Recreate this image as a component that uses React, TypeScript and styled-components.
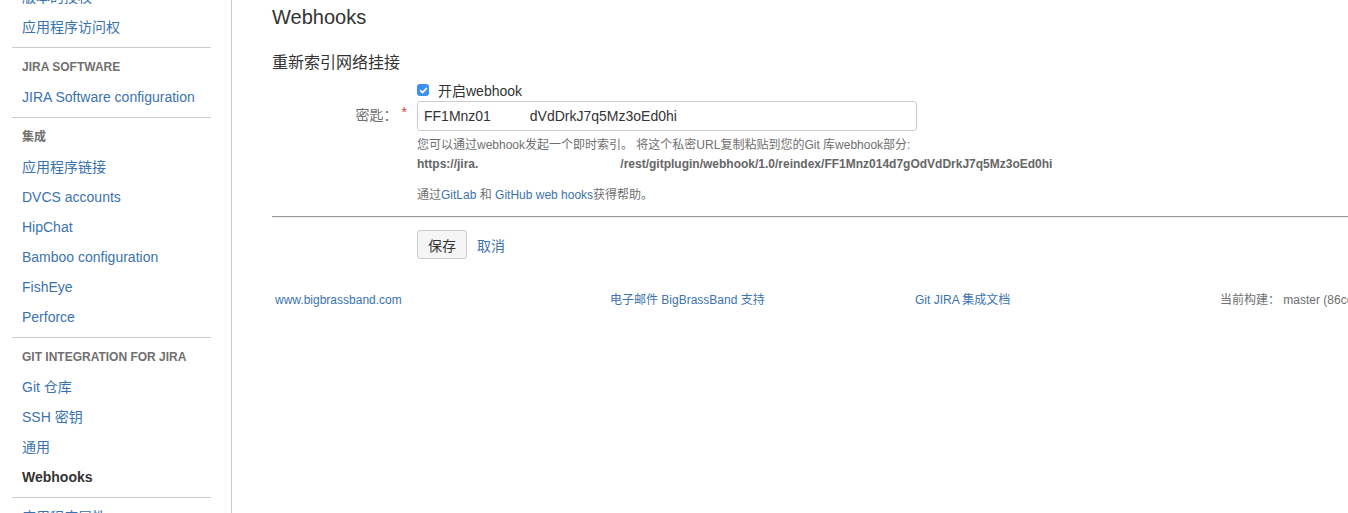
import React from "react";
import styled, { createGlobalStyle } from "styled-components";

const Global = createGlobalStyle`
  html, body { margin: 0; padding: 0; overflow: hidden; background: #fff; }
  body {
    font-family: "Liberation Sans", Arial, "Noto Sans CJK SC", sans-serif;
    font-size: 14px;
    color: #333;
  }
  * { box-sizing: border-box; }
`;

const Page = styled.div`
  display: flex;
  width: 100%;
  min-height: 513px;
`;

const Sidebar = styled.nav`
  flex: 0 0 232px;
  border-right: 1px solid #ccc;
  padding: 0 20px 0 12px;
  margin-top: -18px;
`;

const NavItem = styled.a<{ $active?: boolean }>`
  display: block;
  height: 30px;
  line-height: 30px;
  padding-left: 10px;
  font-size: 14px;
  white-space: nowrap;
  text-decoration: none;
  color: ${(p) => (p.$active ? "#333" : "#3b73af")};
  font-weight: ${(p) => (p.$active ? "bold" : "normal")};
`;

const NavHeading = styled.div`
  height: 30px;
  line-height: 30px;
  padding-left: 10px;
  font-size: 12px;
  font-weight: bold;
  color: #707070;
  text-transform: uppercase;
`;

const Divider = styled.div`
  height: 1px;
  background: #ccc;
  margin: 5px 0 4px;
`;

const Main = styled.main`
  flex: 1;
  min-width: 0;
  padding-left: 40px;
`;

const Title = styled.h2`
  margin: 5px 0 0;
  font-size: 20px;
  line-height: 24px;
  font-weight: normal;
  color: #333;
`;

const SubTitle = styled.h3`
  margin: 24px 0 0;
  font-size: 16px;
  line-height: 20px;
  font-weight: normal;
  color: #333;
`;

const FormGrid = styled.div`
  display: grid;
  grid-template-columns: 145px 1fr;
  margin-top: 7px;
`;

const LabelCell = styled.div`
  display: flex;
  justify-content: flex-end;
  align-items: flex-start;
  padding-right: 10px;
  padding-top: 6px;
  color: #707070;
  font-size: 14px;
  line-height: 18px;
`;

const Req = styled.span`
  color: #d04437;
  font-size: 14px;
  margin-left: 4px;
  line-height: 12px;
`;

const FieldCell = styled.div`
  display: flex;
  flex-direction: column;
`;

const CheckRow = styled.label`
  display: flex;
  align-items: center;
  height: 20px;
  gap: 9px;
  font-size: 14px;
  color: #333;
`;

const CheckBox = styled.span`
  width: 12px;
  height: 12px;
  border-radius: 3px;
  background: #3d8ff6;
  display: inline-flex;
  align-items: center;
  justify-content: center;
`;

const TextInput = styled.input`
  margin-top: 1px;
  width: 500px;
  height: 30px;
  border: 1px solid #ccc;
  border-radius: 3px;
  padding: 0 6px;
  font-family: "Liberation Sans", Arial, sans-serif;
  font-size: 14px;
  color: #333;
  background: #fff;
  white-space: pre;
`;

const Desc = styled.div`
  margin-top: 5px;
  font-size: 12px;
  line-height: 19px;
  color: #707070;
  white-space: nowrap;
`;

const UrlLine = styled.div`
  font-weight: bold;
  color: #666;
`;

const Gap = styled.span<{ $w: number }>`
  display: inline-block;
  width: ${(p) => p.$w}px;
`;

const Help = styled.div`
  margin-top: 11px;
  font-size: 12px;
  line-height: 20px;
  color: #707070;
`;

const Link = styled.a`
  color: #3b73af;
  text-decoration: none;
`;

const CancelLink = styled(Link)`
  font-size: 14px;
`;

const Rule = styled.hr`
  margin: 11px 0 0;
  border: 0;
  border-top: 1px solid #999;
  border-bottom: 1px solid #eee;
  height: 0;
`;

const Buttons = styled.div`
  display: flex;
  align-items: center;
  gap: 10px;
  margin-top: 12px;
  padding-left: 145px;
`;

const Button = styled.button`
  height: 29px;
  padding: 0 10px;
  border: 1px solid #ccc;
  border-radius: 3px;
  background: #f5f5f5;
  color: #333;
  font-family: "Liberation Sans", Arial, "Noto Sans CJK SC", sans-serif;
  font-size: 14px;
`;

const Footer = styled.div`
  display: grid;
  grid-template-columns: 335px 305px 305px 400px;
  margin-top: 31px;
  font-size: 12px;
  line-height: 20px;
  white-space: nowrap;
`;

const FooterCell = styled.div`
  padding-left: 3px;
  color: #707070;
`;

const items: Array<{ kind: "item" | "heading" | "divider"; text?: string; active?: boolean }> = [
  { kind: "item", text: "版本的授权" },
  { kind: "item", text: "应用程序访问权" },
  { kind: "divider" },
  { kind: "heading", text: "JIRA Software" },
  { kind: "item", text: "JIRA Software configuration" },
  { kind: "divider" },
  { kind: "heading", text: "集成" },
  { kind: "item", text: "应用程序链接" },
  { kind: "item", text: "DVCS accounts" },
  { kind: "item", text: "HipChat" },
  { kind: "item", text: "Bamboo configuration" },
  { kind: "item", text: "FishEye" },
  { kind: "item", text: "Perforce" },
  { kind: "divider" },
  { kind: "heading", text: "Git Integration for JIRA" },
  { kind: "item", text: "Git 仓库" },
  { kind: "item", text: "SSH 密钥" },
  { kind: "item", text: "通用" },
  { kind: "item", text: "Webhooks", active: true },
  { kind: "divider" },
  { kind: "item", text: "应用程序属性" },
];

export default function App() {
  return (
    <>
      <Global />
      <Page>
        <Sidebar>
          {items.map((it, i) =>
            it.kind === "divider" ? (
              <Divider key={i} />
            ) : it.kind === "heading" ? (
              <NavHeading key={i}>{it.text}</NavHeading>
            ) : (
              <NavItem key={i} href="#" $active={it.active}>
                {it.text}
              </NavItem>
            )
          )}
        </Sidebar>
        <Main>
          <Title>Webhooks</Title>
          <SubTitle>重新索引网络挂接</SubTitle>
          <FormGrid>
            <div />
            <FieldCell>
              <CheckRow>
                <CheckBox>
                  <svg width="9" height="9" viewBox="0 0 10 10">
                    <path d="M1.8 5.2 L4 7.4 L8.3 2.6" fill="none" stroke="#fff" strokeWidth="1.8" strokeLinecap="round" strokeLinejoin="round" />
                  </svg>
                </CheckBox>
                开启webhook
              </CheckRow>
            </FieldCell>
            <LabelCell>
              密匙：<Req>*</Req>
            </LabelCell>
            <FieldCell>
              <TextInput readOnly value={"FF1Mnz01          dVdDrkJ7q5Mz3oEd0hi"} />
              <Desc>
                您可以通过webhook发起一个即时索引。 将这个私密URL复制粘贴到您的Git 库webhook部分:
                <UrlLine>
                  https://jira.<Gap $w={142} />/rest/gitplugin/webhook/1.0/reindex/FF1Mnz014d7gOdVdDrkJ7q5Mz3oEd0hi
                </UrlLine>
              </Desc>
              <Help>
                通过<Link href="#">GitLab</Link> 和 <Link href="#">GitHub web hooks</Link>获得帮助。
              </Help>
            </FieldCell>
          </FormGrid>
          <Rule />
          <Buttons>
            <Button>保存</Button>
            <CancelLink href="#">取消</CancelLink>
          </Buttons>
          <Footer>
            <FooterCell><Link href="#">www.bigbrassband.com</Link></FooterCell>
            <FooterCell><Link href="#">电子邮件 BigBrassBand 支持</Link></FooterCell>
            <FooterCell><Link href="#">Git JIRA 集成文档</Link></FooterCell>
            <FooterCell>当前构建： master (86cc1f2)</FooterCell>
          </Footer>
        </Main>
      </Page>
    </>
  );
}
